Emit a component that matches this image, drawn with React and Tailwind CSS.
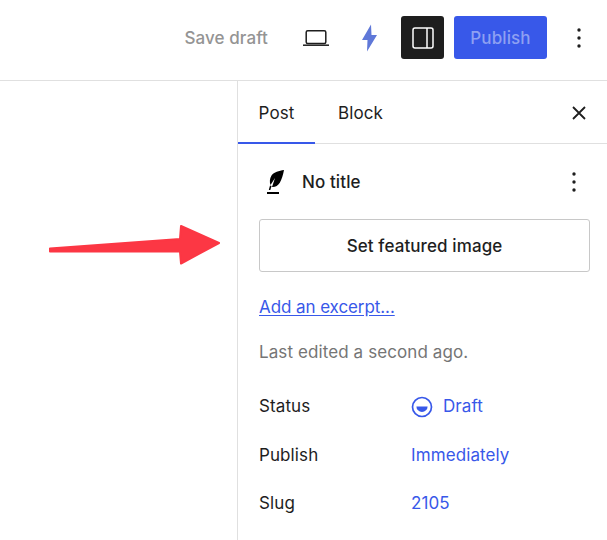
import React from "react";

const Dots = ({ className = "" }) => (
  <svg className={className} width="32" height="32" viewBox="0 0 32 32" fill="#1e1e1e">
    <circle cx="16" cy="8" r="1.7" />
    <circle cx="16" cy="16" r="1.7" />
    <circle cx="16" cy="24" r="1.7" />
  </svg>
);

function Row({ label, children }) {
  return (
    <div className="flex items-center h-6">
      <div className="w-[152px] text-[#1e1e1e]">{label}</div>
      <div className="flex items-center text-[#3858e9]">{children}</div>
    </div>
  );
}

export default function App() {
  return (
    <div className="relative w-[607px] h-[540px] overflow-hidden bg-white text-[17px] tracking-[0.1px] font-['Inter',sans-serif] text-[#1e1e1e]">
      <header className="h-[81px] border-b border-[#e0e0e0] flex items-center justify-end pr-[12px] pb-[5px]">
        <span className="text-[#949494] font-medium mr-[32px] pt-[2px]">Save draft</span>
        <svg className="mr-[26px]" width="32" height="32" viewBox="0 0 32 32" fill="none" stroke="#1e1e1e" strokeWidth="1.5">
          <rect x="6.2" y="8.8" width="19.6" height="12.6" rx="1.5" />
          <path d="M3 23.2h26" />
        </svg>
        <svg className="mr-[19px]" width="24" height="32" viewBox="0 0 24 32" fill="#5f78d8">
          <path d="M13 2.500 L4 18 L9.500 18 L9 29.500 L19 13 L13.500 13 Z" />
        </svg>
        <div className="w-[43px] h-[43px] bg-[#1e1e1e] rounded-[3px] flex items-center justify-center mr-[10px]">
          <svg width="24" height="24" viewBox="0 0 24 24" fill="none" stroke="#fff" strokeWidth="1.5">
            <rect x="2" y="2" width="20" height="20" rx="2" />
            <path d="M16 2v20" />
          </svg>
        </div>
        <div className="w-[93px] h-[43px] bg-[#3858e9] rounded-[3px] flex items-center justify-center text-[#8ea0f2] font-medium mr-[16px] pt-[2px]">Publish</div>
        <Dots />
      </header>
      <div className="flex h-[459px]">
        <div className="w-[237px] shrink-0" />
        <aside className="flex-1 border-l border-[#e0e0e0]">
          <div className="relative h-[63px] border-b border-[#e0e0e0] flex items-center">
            <div className="relative w-[77px] h-[62px] flex items-center justify-center pt-[4px]">
              Post
              <span className="absolute left-0 right-0 bottom-[-1px] h-[2px] bg-[#3858e9]" />
            </div>
            <div className="ml-[23px] pt-[4px]">Block</div>
            <svg className="absolute right-[16px] top-[20px]" width="24" height="24" viewBox="0 0 24 24" fill="none" stroke="#1e1e1e" strokeWidth="1.8">
              <path d="M6 6l12 12M18 6L6 18" />
            </svg>
          </div>
          <div className="pl-[21px] pr-[17px]">
            <div className="flex items-center h-[24px] mt-[26px]">
              <svg width="24" height="26" viewBox="0 0 24 26" fill="#000" className="ml-[4px] mr-[15px]">
                <path d="M21 1c-5 .8-10 2-12.500 5.500C6.500 9.500 6.500 13.500 7.500 16 L12 9 L9 18C11.500 18.500 15 17 16.800 13.800 C18.800 10.500 20 6 21 1z" />
                <path d="M7 16.500 L5.800 21 L7.300 21 L8.600 17z" />
                <path d="M4 23h12v2H4z" />
              </svg>
              <span className="font-medium flex-1 pt-[2px]">No title</span>
              <Dots />
            </div>
            <div className="mt-[25px] h-[53px] w-[331px] border border-[#c8c8c8] rounded-[3px] flex items-center justify-center font-medium pt-[2px]">Set featured image</div>
            <div className="mt-[23px] text-[#3858e9] underline underline-offset-2 leading-6 tracking-[-0.08px]">Add an excerpt...</div>
            <div className="mt-[21px] text-[#757575] leading-6">Last edited a second ago.</div>
            <div className="mt-[31px] flex flex-col gap-[24.5px]">
              <Row label="Status">
                <svg className="mr-[10px]" width="22" height="22" viewBox="0 0 22 22">
                  <circle cx="11" cy="11" r="9.500" fill="none" stroke="#3858e9" strokeWidth="1.700" />
                  <path d="M5.400 10.400h11.200a5.600 5.600 0 0 1-11.200 0z" fill="#3858e9" />
                </svg>
                Draft
              </Row>
              <Row label="Publish">Immediately</Row>
              <Row label="Slug">2105</Row>
            </div>
          </div>
        </aside>
      </div>
      <svg className="absolute left-[46px] top-[222px]" width="180" height="46" viewBox="0 0 180 46">
        <path d="M4 26.500 L134 17 L135 4 L173 21 L135 41.500 L134 29.500 L4 29.500 Z" fill="#fc3744" stroke="#fc3744" strokeWidth="2" strokeLinejoin="round" />
      </svg>
    </div>
  );
}
